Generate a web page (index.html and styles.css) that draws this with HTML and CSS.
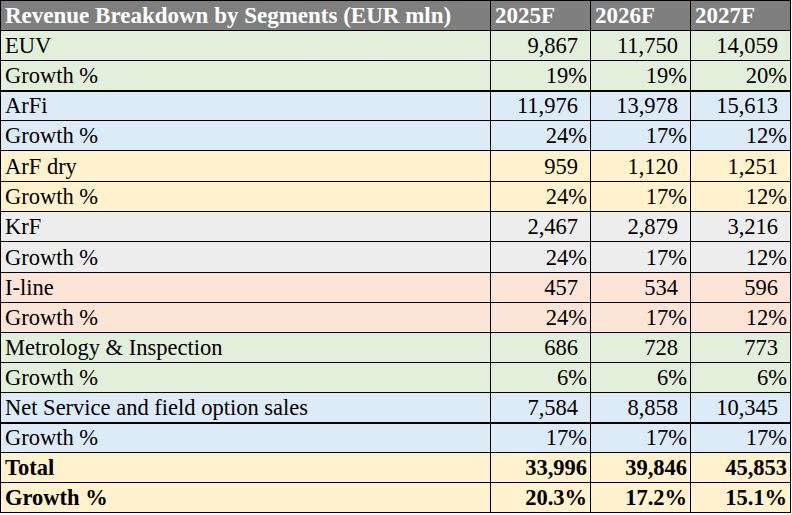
FILE: index.html
```html
<!DOCTYPE html>
<html>
<head>
<meta charset="utf-8">
<link rel="stylesheet" href="styles.css">
</head>
<body>
<table class="rev">
  <colgroup><col class="c-label"><col class="c-num"><col class="c-num"><col class="c-num"></colgroup>
  <thead>
    <tr class="h30">
      <th class="label">Revenue Breakdown by Segments (EUR mln)</th><th>2025F</th><th>2026F</th><th>2027F</th>
    </tr>
  </thead>
  <tbody>
    <tr class="green h30"><td class="label">EUV</td><td class="num">9,867</td><td class="num">11,750</td><td class="num">14,059</td></tr>
    <tr class="green h31 thick"><td class="label">Growth %</td><td class="pct">19%</td><td class="pct">19%</td><td class="pct">20%</td></tr>
    <tr class="blue h29"><td class="label">ArFi</td><td class="num">11,976</td><td class="num">13,978</td><td class="num">15,613</td></tr>
    <tr class="blue h30"><td class="label">Growth %</td><td class="pct">24%</td><td class="pct">17%</td><td class="pct">12%</td></tr>
    <tr class="yellow h31"><td class="label">ArF dry</td><td class="num">959</td><td class="num">1,120</td><td class="num">1,251</td></tr>
    <tr class="yellow h30"><td class="label">Growth %</td><td class="pct">24%</td><td class="pct">17%</td><td class="pct">12%</td></tr>
    <tr class="gray h30"><td class="label">KrF</td><td class="num">2,467</td><td class="num">2,879</td><td class="num">3,216</td></tr>
    <tr class="gray h31"><td class="label">Growth %</td><td class="pct">24%</td><td class="pct">17%</td><td class="pct">12%</td></tr>
    <tr class="orange h30"><td class="label">I-line</td><td class="num">457</td><td class="num">534</td><td class="num">596</td></tr>
    <tr class="orange h30"><td class="label">Growth %</td><td class="pct">24%</td><td class="pct">17%</td><td class="pct">12%</td></tr>
    <tr class="green h30"><td class="label">Metrology &amp; Inspection</td><td class="num">686</td><td class="num">728</td><td class="num">773</td></tr>
    <tr class="green h30"><td class="label">Growth %</td><td class="pct">6%</td><td class="pct">6%</td><td class="pct">6%</td></tr>
    <tr class="blue h31 thick"><td class="label">Net Service and field option sales</td><td class="num">7,584</td><td class="num">8,858</td><td class="num">10,345</td></tr>
    <tr class="blue h29"><td class="label">Growth %</td><td class="pct">17%</td><td class="pct">17%</td><td class="pct">17%</td></tr>
    <tr class="yellow h30 bold"><td class="label">Total</td><td class="pct">33,996</td><td class="pct">39,846</td><td class="pct">45,853</td></tr>
    <tr class="yellow h30 bold"><td class="label">Growth %</td><td class="pct">20.3%</td><td class="pct">17.2%</td><td class="pct">15.1%</td></tr>
  </tbody>
</table>
</body>
</html>
```

FILE: styles.css
```css
html, body {
  margin: 0;
  padding: 0;
  background: #ffffff;
}

.rev {
  border-collapse: separate;
  border-spacing: 0;
  table-layout: fixed;
  width: 791px;
  border-top: 1px solid #000;
  border-left: 1px solid #000;
  font-family: "Liberation Serif", "Times New Roman", serif;
  font-size: 22.5px;
  color: #000;
}

.c-label { width: 490px; }
.c-num { width: 100px; }

.rev th,
.rev td {
  box-sizing: border-box;
  font-family: "Liberation Serif", "Times New Roman", serif;
  font-size: 22.5px;
  border-right: 1px solid #000;
  border-bottom: 1px solid #000;
  padding: 0 3px 1px 4px;
  vertical-align: bottom;
  line-height: 26px;
  white-space: nowrap;
  overflow: hidden;
}

.rev th {
  background: #7f7f7f;
  color: #ffffff;
  font-weight: bold;
  font-size: 23px;
  text-align: left;
}

.h29 td, .h29 th { height: 29px; }
.h30 td, .h30 th { height: 30px; }
.h31 td, .h31 th { height: 31px; }

.thick td { border-bottom-width: 2px; }

.label { text-align: left; }
.num { text-align: right; padding-right: 12px !important; }
.pct { text-align: right; }

.bold td { font-weight: bold; }

.green td { background: #e2efda; }
.blue td { background: #ddebf7; }
.yellow td { background: #fff2cc; }
.gray td { background: #ededed; }
.orange td { background: #fce4d6; }
```
